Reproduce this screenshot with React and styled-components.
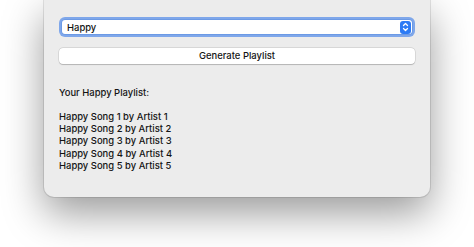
import React from "react";
import styled, { createGlobalStyle } from "styled-components";

const Global = createGlobalStyle`
  html, body { margin: 0; padding: 0; background: #ffffff; }
  body { font-family: Inter, "Liberation Sans", Arial, sans-serif; }
`;

const Stage = styled.div`
  width: 474px;
  height: 247px;
  overflow: hidden;
  padding-left: 44px;
  box-sizing: border-box;
`;

const Window = styled.div`
  width: 386px;
  height: 197px;
  box-sizing: border-box;
  background: #ececec;
  border-radius: 0 0 10px 10px;
  box-shadow: 0 0 0 1px rgba(0, 0, 0, 0.1), 0 16px 40px rgba(0, 0, 0, 0.4);
  padding: 17px 15px 0 15px;
  display: flex;
  flex-direction: column;
  color: #141414;
  font-size: 9.45px;
  font-weight: 500;
`;

const SelectRing = styled.div`
  height: 20px;
  box-sizing: border-box;
  border-radius: 6px;
  padding: 3px;
  background: #7fa7ea;
`;

const SelectField = styled.div`
  height: 100%;
  background: #ffffff;
  border-radius: 3px;
  box-shadow: 0 0 0 0.5px #5b8de0;
  display: flex;
  align-items: center;
  justify-content: space-between;
  padding: 0 1px 0 5px;
  box-sizing: border-box;
`;

const Stepper = styled.div`
  width: 11px;
  height: 13px;
  border-radius: 3px;
  background: #2d7bf5;
  display: flex;
  align-items: center;
  justify-content: center;
`;

const Button = styled.div`
  margin-top: 11px;
  height: 16px;
  background: #ffffff;
  border-radius: 4px;
  box-shadow: 0 0 0 0.5px rgba(0, 0, 0, 0.14), 0 0.5px 1px rgba(0, 0, 0, 0.18);
  display: flex;
  align-items: center;
  justify-content: center;
  line-height: 16px;
`;

const Output = styled.div`
  margin-top: 23px;
  line-height: 12.25px;
  display: flex;
  flex-direction: column;
`;

const Heading = styled.div`
  margin-bottom: 11.5px;
`;

const Line = styled.div``;

const songs = [1, 2, 3, 4, 5];

export default function App() {
  return (
    <>
      <Global />
      <Stage>
        <Window>
          <SelectRing>
            <SelectField>
              <span>Happy</span>
              <Stepper>
                <svg width="7" height="10" viewBox="0 0 7 10" fill="none" stroke="#fff" strokeWidth="1.3" strokeLinecap="round" strokeLinejoin="round">
                  <path d="M1.5 3.5 L3.5 1.5 L5.5 3.5" />
                  <path d="M1.5 6.5 L3.5 8.5 L5.5 6.5" />
                </svg>
              </Stepper>
            </SelectField>
          </SelectRing>
          <Button>Generate Playlist</Button>
          <Output>
            <Heading>Your Happy Playlist:</Heading>
            {songs.map((n) => (
              <Line key={n}>Happy Song {n} by Artist {n}</Line>
            ))}
          </Output>
        </Window>
      </Stage>
    </>
  );
}
